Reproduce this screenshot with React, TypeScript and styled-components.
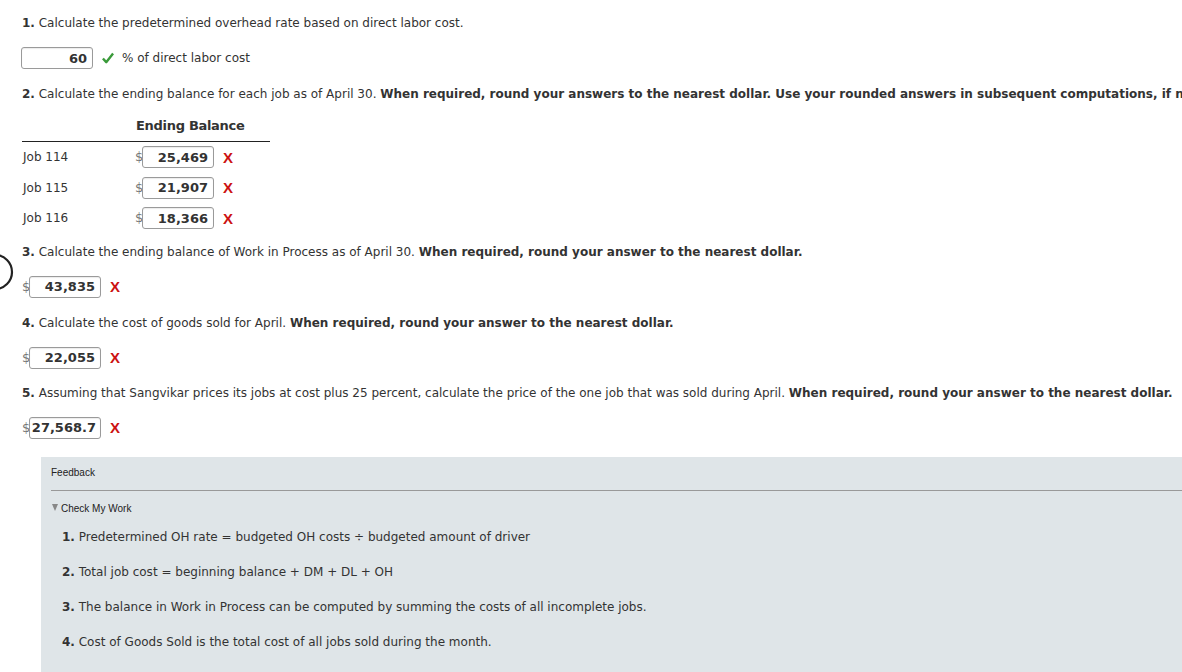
import React from "react";
import styled, { createGlobalStyle } from "styled-components";

const Global = createGlobalStyle`
  html, body { margin: 0; padding: 0; background: #fff; overflow: hidden; }
  body { font-family: "DejaVu Sans", Verdana, sans-serif; font-size: 12px; color: #333; }
`;

const Page = styled.div`
  position: relative;
  width: 1182px;
  height: 672px;
  overflow: hidden;
  padding: 15px 0 0 22px;
  box-sizing: border-box;
`;

const Question = styled.section<{ $gap?: number }>`
  display: flex;
  flex-direction: column;
  margin-bottom: ${(p) => p.$gap ?? 17}px;
`;

const Prompt = styled.div`
  line-height: 16px;
  white-space: nowrap;
  margin-bottom: 16px;
`;

const Num = styled.b`
  font-weight: bold;
`;

const Strong = styled.b`
  font-weight: bold;
`;

const AnswerRow = styled.div`
  display: flex;
  align-items: center;
  height: 22px;
`;

const Dollar = styled.span`
  color: #777;
  font-size: 13px;
  width: 7px;
  line-height: 22px;
`;

const Box = styled.div<{ $tight?: boolean; $shift?: number }>`
  width: 72px;
  height: 22px;
  box-sizing: border-box;
  margin-left: ${(p) => p.$shift ?? 0}px;
  border: 1px solid #9a9a9a;
  border-radius: 3px;
  box-shadow: inset 0 1px 1px rgba(0, 0, 0, 0.08);
  display: flex;
  align-items: center;
  justify-content: flex-end;
  padding-right: ${(p) => (p.$tight ? 4 : 5)}px;
  font-size: 13px;
  font-weight: bold;
  color: #333;
  background: #fff;
`;

const Mark = styled.span`
  margin-left: 9px;
  display: inline-flex;
  align-items: center;
  color: #cc1111;
  font-family: "Liberation Sans", Arial, sans-serif;
  font-weight: bold;
  font-size: 15px;
  width: 12px;
`;

const Unit = styled.span`
  margin-left: 8px;
`;

const Table = styled.div`
  display: grid;
  grid-template-columns: 113px 7px 72px 56px;
  width: 248px;
  margin-top: 0;
  margin-bottom: 10px;
`;

const HeadCell = styled.div`
  grid-column: 1 / span 4;
  display: flex;
  font-size: 13px;
  font-weight: bold;
  line-height: 16px;
  padding: 0 0 7px 114px;
  border-bottom: 1px solid #222;
  letter-spacing: -0.3px;
`;

const Row = styled.div`
  display: contents;
`;

const JobCell = styled.div`
  height: 30.5px;
  display: flex;
  align-items: center;
  padding-left: 1px;
`;

const Cell = styled.div`
  height: 30.5px;
  display: flex;
  align-items: center;
`;

const Panel = styled.div`
  margin-left: 19px;
  background: #dfe5e8;
  padding: 10px 0 20px 10px;
  min-height: 230px;
  font-family: "Liberation Sans", Arial, sans-serif;
`;

const SmallTitle = styled.div`
  font-size: 10px;
  line-height: 12px;
  color: #222;
  padding-bottom: 11px;
  border-bottom: 1px solid #999;
`;

const Toggle = styled.div`
  display: flex;
  align-items: center;
  font-size: 10px;
  line-height: 12px;
  color: #222;
  margin-top: 12px;
  padding-left: 1px;
`;

const Tri = styled.span`
  width: 0;
  height: 0;
  border-left: 3px solid transparent;
  border-right: 3px solid transparent;
  border-top: 7px solid #888;
  margin-right: 3px;
  margin-top: -2px;
`;

const Items = styled.div`
  font-family: "DejaVu Sans", Verdana, sans-serif;
  font-size: 12px;
  color: #333;
  padding-left: 11px;
  margin-top: 14px;
  display: flex;
  flex-direction: column;
  gap: 19px;
`;

const Item = styled.div`
  line-height: 16px;
`;

const Cursor = styled.svg`
  position: absolute;
  left: 0;
  top: 250px;
`;

const Check = () => (
  <svg width="13" height="12" viewBox="0 0 13 12">
    <path d="M1 6.5 L4.6 10.5 L12 1.2" fill="none" stroke="#3a9a3a" strokeWidth="2.6" strokeLinejoin="round" />
  </svg>
);

const jobs = [
  ["Job 114", "25,469"],
  ["Job 115", "21,907"],
  ["Job 116", "18,366"],
];

export default function App() {
  return (
    <>
      <Global />
      <Page>
        <Cursor width="16" height="46" viewBox="0 0 16 46">
          <circle cx="-5" cy="22" r="17" fill="none" stroke="#222" strokeWidth="2.2" />
        </Cursor>

        <Question $gap={17}>
          <Prompt>
            <Num>1.</Num> Calculate the predetermined overhead rate based on direct labor cost.
          </Prompt>
          <AnswerRow>
            <Box $shift={-1}>60</Box>
            <Mark>
              <Check />
            </Mark>
            <Unit>% of direct labor cost</Unit>
          </AnswerRow>
        </Question>

        <Question $gap={0}>
          <Prompt>
            <Num>2.</Num> Calculate the ending balance for each job as of April 30.{" "}
            <Strong>When required, round your answers to the nearest dollar. Use your rounded answers in subsequent computations, if necessary.</Strong>
          </Prompt>
          <Table>
            <HeadCell>Ending Balance</HeadCell>
            {jobs.map(([job, val]) => (
              <Row key={job}>
                <JobCell>{job}</JobCell>
                <Cell>
                  <Dollar>$</Dollar>
                </Cell>
                <Cell>
                  <Box>{val}</Box>
                </Cell>
                <Cell>
                  <Mark>X</Mark>
                </Cell>
              </Row>
            ))}
          </Table>
        </Question>

        <Question $gap={17}>
          <Prompt>
            <Num>3.</Num> Calculate the ending balance of Work in Process as of April 30.{" "}
            <Strong>When required, round your answer to the nearest dollar.</Strong>
          </Prompt>
          <AnswerRow>
            <Dollar>$</Dollar>
            <Box>43,835</Box>
            <Mark>X</Mark>
          </AnswerRow>
        </Question>

        <Question $gap={16}>
          <Prompt>
            <Num>4.</Num> Calculate the cost of goods sold for April.{" "}
            <Strong>When required, round your answer to the nearest dollar.</Strong>
          </Prompt>
          <AnswerRow>
            <Dollar>$</Dollar>
            <Box>22,055</Box>
            <Mark>X</Mark>
          </AnswerRow>
        </Question>

        <Question $gap={18}>
          <Prompt>
            <Num>5.</Num> Assuming that Sangvikar prices its jobs at cost plus 25 percent, calculate the price of the one job that was sold during April.{" "}
            <Strong>When required, round your answer to the nearest dollar.</Strong>
          </Prompt>
          <AnswerRow>
            <Dollar>$</Dollar>
            <Box $tight>27,568.7</Box>
            <Mark>X</Mark>
          </AnswerRow>
        </Question>

        <Panel>
          <SmallTitle>Feedback</SmallTitle>
          <Toggle>
            <Tri />
            Check My Work
          </Toggle>
          <Items>
            <Item>
              <Num>1.</Num> Predetermined OH rate = budgeted OH costs ÷ budgeted amount of driver
            </Item>
            <Item>
              <Num>2.</Num> Total job cost = beginning balance + DM + DL + OH
            </Item>
            <Item>
              <Num>3.</Num> The balance in Work in Process can be computed by summing the costs of all incomplete jobs.
            </Item>
            <Item>
              <Num>4.</Num> Cost of Goods Sold is the total cost of all jobs sold during the month.
            </Item>
          </Items>
        </Panel>
      </Page>
    </>
  );
}
